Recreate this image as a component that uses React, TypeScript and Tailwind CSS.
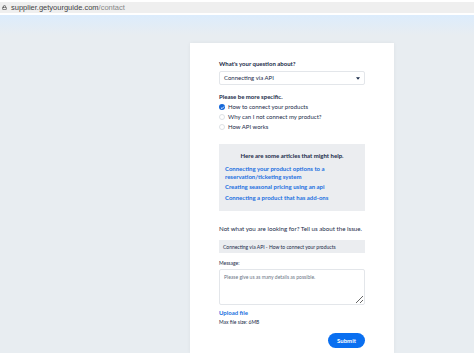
import { Lock } from "lucide-react";

const radios = [
  { label: "How to connect your products", checked: true },
  { label: "Why can I not connect my product?", checked: false },
  { label: "How API works", checked: false },
];

const articles = [
  "Connecting your product options to a reservation/ticketing system",
  "Creating seasonal pricing using an api",
  "Connecting a product that has add-ons",
];

const App = () => {
  return (
    <div className="min-h-screen bg-[#e8edf1] font-['Lato',sans-serif] text-[#1a2b49]">
      {/* Browser address bar */}
      <div className="border-t-2 border-white bg-white">
        <div className="flex h-[11px] items-center gap-[4px] bg-[#efefef] pl-[2px] font-['Liberation_Sans',sans-serif] text-[7.5px] leading-[11px] text-[#444]">
          <Lock className="h-[5px] w-[5px]" strokeWidth={3} />
          <span>
            supplier.getyourguide.com<span className="text-[#888]">/contact</span>
          </span>
        </div>
      </div>
      <div className="h-[2px] bg-white" />
      <div className="h-[20px] bg-gradient-to-b from-[#dcecfc] to-[#e8edf1]" />

      {/* Card */}
      <div className="ml-[190px] mt-[8px] w-[204px] bg-white px-[29px] pb-[5px] pt-[17px] shadow-[0_0_4px_rgba(0,0,0,0.05)]">
        <p className="text-[6px] font-bold leading-[8px]">What's your question about?</p>
        <div className="mt-[3px] flex h-[14px] items-center justify-between rounded-[2px] border border-[#e3e6ea] px-[4px] text-[6px] leading-[8px]">
          <span>Connecting via API</span>
          <svg viewBox="0 0 6 4" className="h-[3px] w-[4px] fill-[#1a2b49]">
            <path d="M0 0h6L3 4z" />
          </svg>
        </div>

        <p className="mt-[8px] text-[6px] font-bold leading-[8px]">Please be more specific.</p>
        <div className="mt-[1px] flex flex-col">
          {radios.map((r) => (
            <div key={r.label} className="flex h-[10px] items-center gap-[3px] text-[6px] leading-[8px]">
              {r.checked ? (
                <span className="flex h-[6px] w-[6px] items-center justify-center rounded-full bg-[#1467d9]">
                  <svg viewBox="0 0 8 8" className="h-[5px] w-[5px]">
                    <path d="M1.5 4.2 3.2 5.8 6.5 2.3" fill="none" stroke="white" strokeWidth="1.4" />
                  </svg>
                </span>
              ) : (
                <span className="h-[6px] w-[6px] rounded-full border border-[#dde1e5] bg-white" />
              )}
              <span>{r.label}</span>
            </div>
          ))}
        </div>

        {/* Help articles */}
        <div className="mt-[12px] bg-[#ebedf0] px-[6px] pb-[9px] pt-[8px]">
          <p className="text-center text-[6px] font-bold leading-[8px]">Here are some articles that might help.</p>
          <div className="mt-[5px] flex flex-col gap-[2px] text-[6px] font-bold leading-[8px] text-[#1b6fe0]">
            <a className="pr-[8px]">{articles[0]}</a>
            <a>{articles[1]}</a>
            <a className="mt-[1px]">{articles[2]}</a>
          </div>
        </div>

        <p className="mt-[14px] text-[6.2px] leading-[8px]">Not what you are looking for? Tell us about the issue.</p>
        <div className="mt-[7px] flex h-[13px] items-center bg-[#ebedf0] px-[4px] text-[5px] leading-[8px]">
          Connecting via API - How to connect your products
        </div>

        <p className="mt-[6px] text-[5px] leading-[8px]">Message:</p>
        <textarea
          className="mt-[2px] block h-[36px] w-full rounded-[2px] border border-[#e3e6ea] px-[4px] py-[3px] text-[5px] leading-[8px] outline-none placeholder:text-[#6b7585]"
          placeholder="Please give us as many details as possible."
        />

        <p className="mt-[4px] text-[6px] font-bold leading-[8px] text-[#1b6fe0]">Upload file</p>
        <p className="mt-[1px] text-[5px] leading-[8px]">Max file size: 6MB</p>

        <div className="mt-[7px] flex justify-end">
          <button className="flex h-[15px] w-[37px] items-center justify-center rounded-full bg-[#0a6ff0] text-[6px] font-bold text-white">
            Submit
          </button>
        </div>
      </div>
    </div>
  );
};

export default App;
